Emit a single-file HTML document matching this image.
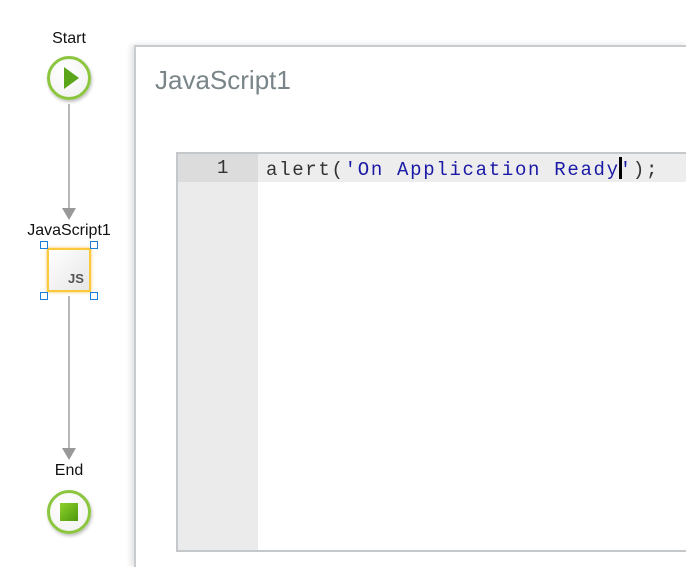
<!DOCTYPE html>
<html><head><style>
html,body{margin:0;width:686px;height:567px;overflow:hidden}
body{background:#fff;position:relative;font-family:"Segoe UI","Liberation Sans",sans-serif}
.a{position:absolute}
.lbl{font-size:16px;color:#111;text-align:center;width:120px;left:9px}
.circ{width:38px;height:38px;border-radius:50%;border:3px solid #8cc63f;background:radial-gradient(circle at 40% 35%,#fff,#f0f0f0);box-shadow:1px 2px 3px rgba(0,0,0,.25)}
.code{font-family:"Liberation Mono",monospace;font-size:19px;letter-spacing:1.7px}
</style></head><body>
<div class="a lbl" style="top:30px">Start</div>
<div class="a circ" style="left:47px;top:56px"></div>
<svg class="a" style="left:0;top:0" width="130" height="567">
<polygon points="64,67 64,89 79,78" fill="#5aa51a"/>
<line x1="69" y1="104" x2="69" y2="210" stroke="#a0a0a0" stroke-width="1.5"/>
<polygon points="62,208 76,208 69,220" fill="#999"/>
<line x1="69" y1="296" x2="69" y2="450" stroke="#a0a0a0" stroke-width="1.5"/>
<polygon points="62,448 76,448 69,460" fill="#999"/>
</svg>
<div class="a lbl" style="top:222px">JavaScript1</div>
<div class="a" style="left:47px;top:248px;width:40px;height:40px;border:2px solid #fbc93a;background:linear-gradient(135deg,#fff,#e6e6e6);box-shadow:0 0 3px #f8c050"></div>
<div class="a" style="left:68px;top:271px;font-size:13px;font-weight:bold;color:#555">JS</div>
<div class="a" style="left:40px;top:241px;width:6px;height:6px;border:1px solid #1a7fd8;background:#fff"></div>
<div class="a" style="left:90px;top:241px;width:6px;height:6px;border:1px solid #1a7fd8;background:#fff"></div>
<div class="a" style="left:40px;top:292px;width:6px;height:6px;border:1px solid #1a7fd8;background:#fff"></div>
<div class="a" style="left:90px;top:292px;width:6px;height:6px;border:1px solid #1a7fd8;background:#fff"></div>
<div class="a lbl" style="top:462px">End</div>
<div class="a circ" style="left:47px;top:490px"></div>
<div class="a" style="left:60px;top:503px;width:18px;height:18px;background:linear-gradient(135deg,#8fd12a,#4d9a10)"></div>
<div class="a" style="left:134px;top:45px;width:552px;height:520px;border:2px solid #c9cccf;border-bottom:0;border-right:0;background:#fff;box-shadow:-3px 0 6px rgba(0,0,0,.12)"></div>
<div class="a" style="left:155px;top:65px;font-size:26px;color:#7a8589">JavaScript1</div>
<div class="a" style="left:176px;top:152px;width:510px;height:396px;border:2px solid #c4c8cb;border-right:0;background:#fff"></div>
<div class="a" style="left:178px;top:154px;width:80px;height:396px;background:#ebebeb"></div>
<div class="a" style="left:178px;top:154px;width:80px;height:28px;background:#dcdcdc"></div>
<div class="a" style="left:258px;top:154px;width:428px;height:28px;background:#ededed"></div>
<div class="a code" style="left:217px;top:157px;color:#333">1</div>
<div class="a code" style="left:266px;top:157px;color:#333;white-space:pre">alert(<span style="color:#1a1aa6">'On Application Ready</span><span style="display:inline-block;width:3px;height:22px;background:#000;vertical-align:-4px;margin-left:-1px;margin-right:-2px"></span><span style="color:#1a1aa6">'</span>);</div>
</body></html>
